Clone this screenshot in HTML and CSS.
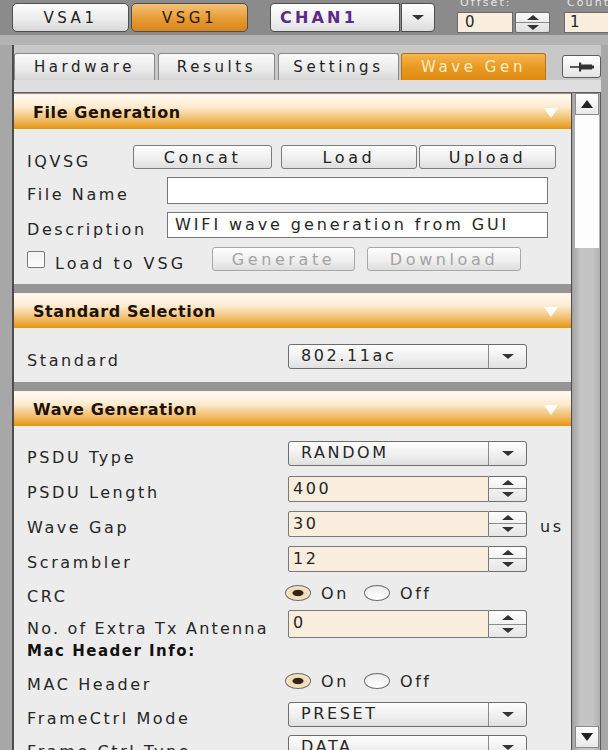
FILE: index.html
```html
<!DOCTYPE html>
<html>
<head>
<meta charset="utf-8">
<title>Wave Gen</title>
<link rel="stylesheet" href="styles.css">
</head>
<body>
<div class="topbar">
  <button class="tbtn">VSA1</button>
  <button class="tbtn tbtn-on">VSG1</button>
  <div class="chan">
    <span class="chan-val">CHAN1</span>
    <span class="chan-btn"><i class="tri tri-down"></i></span>
  </div>
  <div class="field">
    <span class="field-lbl">Offset:</span>
    <div class="field-row">
      <span class="field-box">0</span>
      <span class="field-spin"><span class="half"><i class="tri tri-up"></i></span><span class="half"><i class="tri tri-down"></i></span></span>
    </div>
  </div>
  <div class="field field-count">
    <span class="field-lbl">Count:</span>
    <div class="field-row">
      <span class="field-box field-box-wide">1</span>
    </div>
  </div>
</div>
<div class="band"></div>
<div class="main">
  <div class="tabpanel">
    <div class="tabs">
      <span class="tab tab-hw">Hardware</span>
      <span class="tab tab-res">Results</span>
      <span class="tab tab-set">Settings</span>
      <span class="tab tab-wg tab-on">Wave Gen</span>
      <span class="pin"><svg width="26" height="12" viewBox="0 0 26 12"><path d="M1 6h9" stroke="#333" stroke-width="1.6"/><rect x="10" y="1.5" width="2.2" height="9" fill="#333"/><rect x="12" y="3.5" width="11" height="5" fill="#333"/><rect x="23" y="4.5" width="2" height="3" fill="#333"/></svg></span>
    </div>
    <div class="strip"></div>
    <div class="content">
      <div class="sections">
        <section class="sec">
          <div class="sec-hd"><h2>File Generation</h2><i class="sec-tri"></i></div>
          <div class="sec-bd fg">
            <div class="fg-row fg-r1">
              <span class="lbl lbl-iq">IQVSG</span>
              <button class="btn btn-concat">Concat</button>
              <button class="btn btn-load">Load</button>
              <button class="btn btn-up">Upload</button>
            </div>
            <div class="fg-row fg-r2">
              <span class="lbl lbl-fn">File Name</span>
              <span class="txt"></span>
            </div>
            <div class="fg-row fg-r3">
              <span class="lbl lbl-fn">Description</span>
              <span class="txt">WIFI wave generation from GUI</span>
            </div>
            <div class="fg-row fg-r4">
              <span class="chk"></span>
              <span class="lbl lbl-chk">Load to VSG</span>
              <button class="btn btn-dis btn-gen">Generate</button>
              <button class="btn btn-dis btn-dl">Download</button>
            </div>
          </div>
        </section>
        <section class="sec">
          <div class="sec-hd"><h2>Standard Selection</h2><i class="sec-tri"></i></div>
          <div class="sec-bd std">
            <div class="row">
              <span class="lbl">Standard</span>
              <div class="dd"><span class="dd-val">802.11ac</span><span class="dd-btn"><i class="tri tri-down"></i></span></div>
            </div>
          </div>
        </section>
        <section class="sec">
          <div class="sec-hd"><h2>Wave Generation</h2><i class="sec-tri"></i></div>
          <div class="sec-bd wg">
            <div class="row">
              <span class="lbl">PSDU Type</span>
              <div class="dd"><span class="dd-val">RANDOM</span><span class="dd-btn"><i class="tri tri-down"></i></span></div>
            </div>
            <div class="row">
              <span class="lbl">PSDU Length</span>
              <div class="sp"><span class="sp-val">400</span><span class="sp-btns"><span class="half"><i class="tri tri-up"></i></span><span class="half"><i class="tri tri-down"></i></span></span></div>
            </div>
            <div class="row">
              <span class="lbl">Wave Gap</span>
              <div class="sp"><span class="sp-val">30</span><span class="sp-btns"><span class="half"><i class="tri tri-up"></i></span><span class="half"><i class="tri tri-down"></i></span></span></div>
              <span class="unit">us</span>
            </div>
            <div class="row">
              <span class="lbl">Scrambler</span>
              <div class="sp"><span class="sp-val">12</span><span class="sp-btns"><span class="half"><i class="tri tri-up"></i></span><span class="half"><i class="tri tri-down"></i></span></span></div>
            </div>
            <div class="row row-32">
              <span class="lbl">CRC</span>
              <div class="radios"><span class="radio radio-on"></span><span class="rtxt">On</span><span class="radio"></span><span class="rtxt">Off</span></div>
            </div>
            <div class="row row-32">
              <span class="lbl lbl-tight">No. of Extra Tx Antenna</span>
              <div class="sp sp-tall"><span class="sp-val">0</span><span class="sp-btns"><span class="half"><i class="tri tri-up"></i></span><span class="half"><i class="tri tri-down"></i></span></span></div>
            </div>
            <div class="subhd">Mac Header Info:</div>
            <div class="row row-36">
              <span class="lbl">MAC Header</span>
              <div class="radios"><span class="radio radio-on"></span><span class="rtxt">On</span><span class="radio"></span><span class="rtxt">Off</span></div>
            </div>
            <div class="row row-32">
              <span class="lbl">FrameCtrl Mode</span>
              <div class="dd"><span class="dd-val">PRESET</span><span class="dd-btn"><i class="tri tri-down"></i></span></div>
            </div>
            <div class="row">
              <span class="lbl">Frame Ctrl Type</span>
              <div class="dd"><span class="dd-val">DATA</span><span class="dd-btn"><i class="tri tri-down"></i></span></div>
            </div>
          </div>
        </section>
      </div>
      <div class="scrollbar">
        <span class="sb-btn"><i class="sb-tri sb-up"></i></span>
        <span class="sb-thumb"></span>
        <span class="sb-track"></span>
        <span class="sb-btn sb-btn-down"><i class="sb-tri sb-down"></i></span>
      </div>
    </div>
  </div>
</div>
</body>
</html>
```

FILE: styles.css
```css
* { box-sizing: border-box; margin: 0; padding: 0; }
html, body { width: 608px; height: 750px; overflow: hidden; }
body {
  background: #a7a7a7;
  font-family: "DejaVu Sans", sans-serif;
  font-size: 16px;
  color: #262626;
  letter-spacing: 2.6px;
}
button { font-family: inherit; cursor: default; }

/* generic triangles */
.tri { display: block; width: 0; height: 0; border-left: 6px solid transparent; border-right: 6px solid transparent; }
.tri-down { border-top: 5px solid #333; }
.tri-up { border-bottom: 5px solid #333; }

/* top bar */
.topbar {
  height: 35px;
  background: #8b8b8b;
  display: flex;
  align-items: flex-start;
  padding: 3px 0 0 12px;
  overflow: hidden;
}
.topbar > * { flex-shrink: 0; }
.tbtn {
  width: 117px; height: 29px;
  border: 1px solid #4e4e4e; border-radius: 5px;
  background: linear-gradient(#fdfdfd, #ececec 55%, #d7d7d7);
  font-size: 15px; letter-spacing: 3.5px; color: #222;
  margin-right: 2px;
}
.tbtn-on { background: linear-gradient(#f4c27a, #e79b34 55%, #d8861c); color: #2a1a05; }
.chan { display: flex; height: 29px; margin-left: 20px; }
.chan-val {
  width: 130px; height: 29px;
  border: 1px solid #4e4e4e; border-radius: 4px 0 0 4px;
  background: linear-gradient(#ffffff, #f0f0f0 60%, #e2e2e2);
  color: #5a2a88; font-weight: bold; font-size: 16px; letter-spacing: 3.2px;
  display: flex; align-items: center; padding-left: 9px;
}
.chan-btn {
  width: 34px; height: 29px; margin-left: 1px;
  border: 1px solid #4e4e4e; border-radius: 0 4px 4px 0;
  background: linear-gradient(#ffffff, #ececec 60%, #dcdcdc);
  display: flex; align-items: center; justify-content: center;
}
.field { display: flex; flex-direction: column; margin-top: -6px; margin-left: 22px; }
.field-count { margin-left: 14px; }
.field-lbl { font-size: 11px; line-height: 12px; letter-spacing: 2.1px; color: #e6e6e6; padding-left: 3px; height: 12px; }
.field-row { display: flex; margin-top: 3px; }
.field-box {
  width: 56px; height: 21px;
  background: #f9eedd; border: 1px solid #6a6a6a;
  font-size: 15px; line-height: 19px; padding-left: 7px; letter-spacing: 0;
}
.field-box-wide { width: 60px; padding-left: 5px; }
.field-spin {
  width: 35px; height: 21px; margin-left: 2px;
  border: 1px solid #6a6a6a; border-radius: 2px;
  background: linear-gradient(#fafafa, #dedede);
  display: flex; flex-direction: column;
}
.field-spin .half { flex: 1; display: flex; align-items: center; justify-content: center; }
.field-spin .half + .half { border-top: 1px solid #8a8a8a; }

.band { height: 10px; background: #b3b3b3; }

/* tab panel */
.main { display: flex; padding-left: 12px; }
.tabpanel { width: 589px; border-left: 2px solid #4c4c4c; background: #c8c8c8; }
.tabs { height: 35px; display: flex; align-items: flex-start; padding-top: 8px; }
.tab {
  height: 27px;
  border: 1px solid #8a8a8a; border-bottom: none; border-radius: 3px 3px 0 0;
  background: linear-gradient(#fbfbfb, #e8e8e8 65%, #d6d6d6);
  font-size: 15px; letter-spacing: 3.6px; color: #222;
  display: flex; align-items: center; justify-content: center;
  margin-right: 3px; flex-shrink: 0;
}
.tab-hw { width: 141px; }
.tab-res { width: 117px; }
.tab-set { width: 121px; margin-right: 2px; }
.tab-wg { width: 145px; }
.tab-on { background: linear-gradient(#f6b650, #e99a22 50%, #df8b12); color: #fbefc2; border-color: #b7720e; }
.pin {
  width: 39px; height: 23px; margin: 2px 0 0 13px; flex-shrink: 0;
  border: 1px solid #5c5c5c; border-radius: 3px;
  background: linear-gradient(#ffffff, #e4e4e4);
  display: flex; align-items: center; justify-content: center;
}
.strip { height: 13px; background: #dedede; border-bottom: 1px solid #5e5e5e; }

.content { display: flex; }
.sections { width: 557px; height: 660px; overflow: hidden; background: #959595; padding-top: 1px; }
.sec + .sec { margin-top: 9px; }
.sec-hd {
  height: 35px;
  background: linear-gradient(#fffaf1 0%, #fdebd0 35%, #f2bf6e 70%, #e59512 100%);
  border-top: 1px solid #fff3e0;
  display: flex; align-items: center; justify-content: space-between;
  padding: 0 13px 0 19px;
}
.sec-hd h2 { font-size: 16px; font-weight: bold; letter-spacing: 0.6px; color: #1e1206; }
.sec-tri { width: 0; height: 0; border-left: 7px solid transparent; border-right: 7px solid transparent; border-top: 10px solid #fffdf8; margin-top: 2px; }
.sec-bd { background: #ececec; padding-left: 13px; }

/* labels */
.lbl { padding-top: 8px; white-space: nowrap; }
.lbl-tight { letter-spacing: 2.2px; }

/* file gen */
.fg { padding-top: 16px; height: 155px; }
.fg-row { display: flex; align-items: center; }
.fg-r1 { height: 24px; }
.fg-r2 { height: 27px; margin-top: 8px; }
.fg-r3 { height: 26px; margin-top: 8px; }
.fg-r4 { height: 24px; margin-top: 9px; }
.lbl-iq { width: 106px; }
.lbl-fn { width: 140px; }
.btn {
  height: 24px; flex-shrink: 0;
  border: 1px solid #7c7c7c; border-radius: 3px;
  background: linear-gradient(#fefefe, #efefef 55%, #dedede);
  font-size: 16px; letter-spacing: 3.6px; color: #222;
}
.btn-concat { width: 139px; }
.btn-load { width: 136px; margin-left: 9px; }
.btn-up { width: 137px; margin-left: 2px; }
.btn-dis { color: #a3a3a3; border-color: #a8a8a8; }
.btn-gen { width: 143px; }
.btn-dl { width: 154px; margin-left: 12px; }
.txt {
  width: 381px; height: 100%;
  background: #fff; border: 1px solid #777;
  padding-left: 7px; line-height: 24px; white-space: nowrap; overflow: hidden;
  letter-spacing: 2.9px;
}
.chk {
  width: 18px; height: 17px; flex-shrink: 0;
  border: 1px solid #7a7a7a; border-radius: 2px;
  background: linear-gradient(#f2f2f2, #fdfdfd);
}
.lbl-chk { margin-left: 10px; width: 157px; letter-spacing: 3px; }

/* rows */
.std { padding-top: 11px; height: 54px; }
.wg { padding-top: 10px; }
.row { display: grid; grid-template-columns: 261px 239px auto; align-items: center; height: 35px; }
.row-32 { height: 32px; }
.row-36 { height: 36px; }
.dd {
  height: 25px; display: flex;
  border: 1px solid #6e6e6e; border-radius: 3px;
  background: linear-gradient(#fefefe, #eeeeee 60%, #e0e0e0);
}
.dd-val { flex: 1; padding-left: 12px; line-height: 22px; border-right: 1px solid #8a8a8a; white-space: nowrap; }
.dd-btn { width: 37px; display: flex; align-items: center; justify-content: center; }
.sp { height: 26px; display: flex; }
.sp-tall { height: 28px; }
.sp-val {
  flex: 1; background: #f9eedd; border: 1px solid #7a7a7a; border-radius: 2px 0 0 2px;
  padding-left: 4px; line-height: 24px;
}
.sp-btns {
  width: 38px; display: flex; flex-direction: column;
  border: 1px solid #6e6e6e; border-left: none; border-radius: 0 3px 3px 0;
  background: linear-gradient(#fdfdfd, #e6e6e6);
}
.sp-btns .half { flex: 1; display: flex; align-items: center; justify-content: center; }
.sp-btns .half + .half { border-top: 1px solid #8c8c8c; }
.unit { margin-left: 13px; padding-top: 6px; }
.radios { display: flex; align-items: center; padding-top: 2px; }
.radio {
  width: 26px; height: 16px; border-radius: 50%; flex-shrink: 0;
  border: 1px solid #6a6a6a;
  background: linear-gradient(#ececec, #ffffff);
}
.radio-on {
  margin-left: -3px;
  background: radial-gradient(ellipse at center, #2e2418 0 28%, #f2d8ad 36%, #f7e6c8 70%, #fff 100%);
}
.rtxt { margin-left: 10px; margin-right: 15px; }
.subhd { height: 22px; font-size: 15px; font-weight: bold; letter-spacing: 1.5px; color: #111; line-height: 22px; }

/* scrollbar */
.scrollbar {
  width: 30px; height: 660px;
  border-left: 1px solid #4c4c4c; border-right: 1px solid #5a5a5a;
  background: linear-gradient(90deg, #a2a2a2, #c4c4c4 30%, #c4c4c4 75%, #b0b0b0);
  display: flex; flex-direction: column; align-items: stretch;
}
.sb-btn {
  height: 22px; margin: 0 1px 0 3px;
  border: 1px solid #8a8a8a; background: linear-gradient(#ffffff, #e8e8e8);
  display: flex; align-items: center; justify-content: center;
}
.sb-thumb { height: 133px; margin: 0 1px 0 3px; background: #fdfdfd; }
.sb-track { flex: 1; }
.sb-btn-down { margin-bottom: 5px; }
.sb-tri { width: 0; height: 0; border-left: 6px solid transparent; border-right: 6px solid transparent; }
.sb-up { border-bottom: 8px solid #222; }
.sb-down { border-top: 8px solid #222; }
```
